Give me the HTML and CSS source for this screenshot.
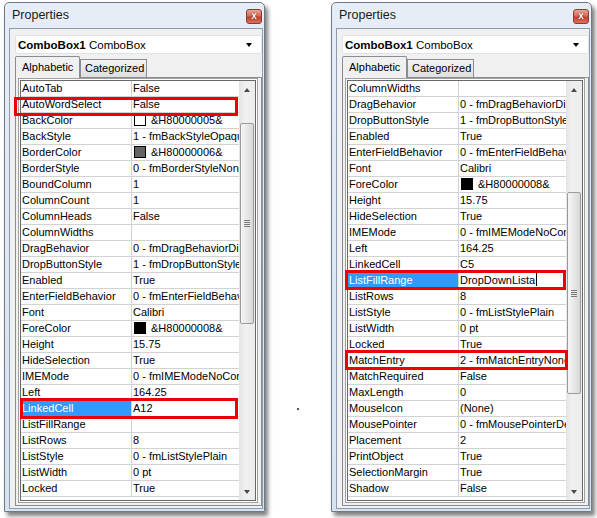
FILE: index.html
```html
<!DOCTYPE html>
<html>
<head>
<meta charset="utf-8">
<title>Properties</title>
<link rel="stylesheet" href="styles.css">
</head>
<body>
<div class="stage">
  <div class="win">
    <div class="titlebar"><span class="title">Properties</span><span class="close">x</span></div>
    <div class="framebody">
      <div class="content">
        <div class="combo"><span class="combo-text"><b>ComboBox1</b> ComboBox</span><span class="combo-arrow"></span></div>
        <div class="tabs"><div class="tab active">Alphabetic</div><div class="tab">Categorized</div></div>
        <div class="panel">
          <div class="grid">
            <div class="grid-inner">
              <div class="rows">
                <div class="row"><div class="name">AutoTab</div><div class="val">False</div></div>
                <div class="row"><div class="name">AutoWordSelect</div><div class="val">False</div></div>
                <div class="row"><div class="name">BackColor</div><div class="val"><span class="sw sw-white"></span>&amp;H80000005&amp;</div></div>
                <div class="row"><div class="name">BackStyle</div><div class="val">1 - fmBackStyleOpaque</div></div>
                <div class="row"><div class="name">BorderColor</div><div class="val"><span class="sw sw-gray"></span>&amp;H80000006&amp;</div></div>
                <div class="row"><div class="name">BorderStyle</div><div class="val">0 - fmBorderStyleNone</div></div>
                <div class="row"><div class="name">BoundColumn</div><div class="val">1</div></div>
                <div class="row"><div class="name">ColumnCount</div><div class="val">1</div></div>
                <div class="row"><div class="name">ColumnHeads</div><div class="val">False</div></div>
                <div class="row"><div class="name">ColumnWidths</div><div class="val"></div></div>
                <div class="row"><div class="name">DragBehavior</div><div class="val">0 - fmDragBehaviorDisabled</div></div>
                <div class="row"><div class="name">DropButtonStyle</div><div class="val">1 - fmDropButtonStyleArrow</div></div>
                <div class="row"><div class="name">Enabled</div><div class="val">True</div></div>
                <div class="row"><div class="name">EnterFieldBehavior</div><div class="val">0 - fmEnterFieldBehaviorSelectAll</div></div>
                <div class="row"><div class="name">Font</div><div class="val">Calibri</div></div>
                <div class="row"><div class="name">ForeColor</div><div class="val"><span class="sw sw-black"></span>&amp;H80000008&amp;</div></div>
                <div class="row"><div class="name">Height</div><div class="val">15.75</div></div>
                <div class="row"><div class="name">HideSelection</div><div class="val">True</div></div>
                <div class="row"><div class="name">IMEMode</div><div class="val">0 - fmIMEModeNoControl</div></div>
                <div class="row"><div class="name">Left</div><div class="val">164.25</div></div>
                <div class="row"><div class="name sel">LinkedCell</div><div class="val">A12</div></div>
                <div class="row"><div class="name">ListFillRange</div><div class="val"></div></div>
                <div class="row"><div class="name">ListRows</div><div class="val">8</div></div>
                <div class="row"><div class="name">ListStyle</div><div class="val">0 - fmListStylePlain</div></div>
                <div class="row"><div class="name">ListWidth</div><div class="val">0 pt</div></div>
                <div class="row"><div class="name">Locked</div><div class="val">True</div></div>
              </div>
              <div class="sb">
                <div class="sb-btn"><span class="arr-up"></span></div>
                <div class="thumb thumb-left"><span class="grip"></span></div>
                <div class="sb-fill"></div>
                <div class="sb-btn"><span class="arr-down"></span></div>
              </div>
            </div>
          </div>
        </div>
      </div>
    </div>
    <div class="hl hl-l1"></div>
    <div class="hl hl-l2"></div>
  </div>

  <div class="gap"><span class="dot"></span></div>

  <div class="win">
    <div class="titlebar"><span class="title">Properties</span><span class="close">x</span></div>
    <div class="framebody">
      <div class="content">
        <div class="combo"><span class="combo-text"><b>ComboBox1</b> ComboBox</span><span class="combo-arrow"></span></div>
        <div class="tabs"><div class="tab active">Alphabetic</div><div class="tab">Categorized</div></div>
        <div class="panel">
          <div class="grid">
            <div class="grid-inner">
              <div class="rows">
                <div class="row"><div class="name">ColumnWidths</div><div class="val"></div></div>
                <div class="row"><div class="name">DragBehavior</div><div class="val">0 - fmDragBehaviorDisabled</div></div>
                <div class="row"><div class="name">DropButtonStyle</div><div class="val">1 - fmDropButtonStyleArrow</div></div>
                <div class="row"><div class="name">Enabled</div><div class="val">True</div></div>
                <div class="row"><div class="name">EnterFieldBehavior</div><div class="val">0 - fmEnterFieldBehaviorSelectAll</div></div>
                <div class="row"><div class="name">Font</div><div class="val">Calibri</div></div>
                <div class="row"><div class="name">ForeColor</div><div class="val"><span class="sw sw-black"></span>&amp;H80000008&amp;</div></div>
                <div class="row"><div class="name">Height</div><div class="val">15.75</div></div>
                <div class="row"><div class="name">HideSelection</div><div class="val">True</div></div>
                <div class="row"><div class="name">IMEMode</div><div class="val">0 - fmIMEModeNoControl</div></div>
                <div class="row"><div class="name">Left</div><div class="val">164.25</div></div>
                <div class="row"><div class="name">LinkedCell</div><div class="val">C5</div></div>
                <div class="row"><div class="name sel">ListFillRange</div><div class="val">DropDownLista<span class="caret"></span></div></div>
                <div class="row"><div class="name">ListRows</div><div class="val">8</div></div>
                <div class="row"><div class="name">ListStyle</div><div class="val">0 - fmListStylePlain</div></div>
                <div class="row"><div class="name">ListWidth</div><div class="val">0 pt</div></div>
                <div class="row"><div class="name">Locked</div><div class="val">True</div></div>
                <div class="row"><div class="name">MatchEntry</div><div class="val">2 - fmMatchEntryNone</div></div>
                <div class="row"><div class="name">MatchRequired</div><div class="val">False</div></div>
                <div class="row"><div class="name">MaxLength</div><div class="val">0</div></div>
                <div class="row"><div class="name">MouseIcon</div><div class="val">(None)</div></div>
                <div class="row"><div class="name">MousePointer</div><div class="val">0 - fmMousePointerDefault</div></div>
                <div class="row"><div class="name">Placement</div><div class="val">2</div></div>
                <div class="row"><div class="name">PrintObject</div><div class="val">True</div></div>
                <div class="row"><div class="name">SelectionMargin</div><div class="val">True</div></div>
                <div class="row"><div class="name">Shadow</div><div class="val">False</div></div>
              </div>
              <div class="sb">
                <div class="sb-btn"><span class="arr-up"></span></div>
                <div class="thumb thumb-right"><span class="grip"></span></div>
                <div class="sb-fill"></div>
                <div class="sb-btn"><span class="arr-down"></span></div>
              </div>
            </div>
          </div>
        </div>
      </div>
    </div>
    <div class="hl hl-r1"></div>
    <div class="hl hl-r2"></div>
  </div>
</div>
</body>
</html>
```

FILE: styles.css
```css
html, body {
  margin: 0;
  padding: 0;
}
body {
  width: 597px;
  height: 518px;
  overflow: hidden;
  background: #ffffff;
  font-family: "Liberation Sans", Arial, sans-serif;
  color: #000;
}
.stage {
  display: flex;
  align-items: flex-start;
  padding: 2px 0 0 4px;
}
.win {
  position: relative;
  width: 261px;
  height: 510px;
  box-sizing: border-box;
  border: 1px solid #6e7a8a;
  border-radius: 5px 5px 0 0;
  background: linear-gradient(#e6edf6, #d7e3f0);
  box-shadow: 3px 4px 4px rgba(0, 0, 0, 0.5);
  display: flex;
  flex-direction: column;
  flex: none;
}
.titlebar {
  height: 25px;
  flex: none;
  display: flex;
  justify-content: space-between;
  align-items: flex-start;
  padding: 0 2px 0 7px;
}
.title {
  font-size: 12.5px;
  line-height: 25px;
  color: #1b1b1b;
}
.close {
  margin-top: 6px;
  width: 16px;
  height: 15px;
  box-sizing: border-box;
  border: 1px solid #8a3a2f;
  border-radius: 3px;
  background: linear-gradient(#eaa595, #d46b58 45%, #c0412d 55%, #d9725c);
  color: #fff;
  font-size: 10px;
  font-weight: bold;
  line-height: 12px;
  text-align: center;
  text-shadow: 0 0 1px #5a1c12, 0 0 1px #5a1c12;
}
.framebody {
  flex: 1;
  min-width: 0;
  min-height: 0;
  display: flex;
  padding: 0 1px 2px 4px;
}
.content {
  flex: 1;
  min-width: 0;
  display: flex;
  flex-direction: column;
  border: 1px solid #8d9bb0;
  background: #f0f0f0;
  padding: 6px 0 2px 5px;
}
.combo {
  height: 19px;
  box-sizing: border-box;
  flex: none;
  border: 1px solid #dfe3e9;
  border-radius: 2px;
  background: #fff;
  display: flex;
  align-items: center;
  justify-content: space-between;
  padding: 0 9px 0 2px;
  font-size: 11.5px;
}
.combo-text b {
  font-weight: bold;
}
.combo-arrow {
  width: 0;
  height: 0;
  border-left: 3.5px solid transparent;
  border-right: 3.5px solid transparent;
  border-top: 4px solid #000;
  margin-top: 1px;
}
.tabs {
  display: flex;
  align-items: flex-end;
  height: 21px;
  margin-top: 2px;
  flex: none;
  position: relative;
  z-index: 1;
}
.tab {
  height: 18px;
  box-sizing: border-box;
  border: 1px solid #898c95;
  border-bottom: none;
  background: linear-gradient(#f2f2f2, #e0e0e0);
  font-size: 11px;
  line-height: 17px;
  padding: 0 0 0 4px;
  width: 67px;
}
.tab.active {
  height: 22px;
  margin-bottom: -1px;
  width: 65px;
  background: #f0f0f0;
  line-height: 20px;
  padding-left: 6px;
  border-radius: 2px 2px 0 0;
}
.panel {
  flex: 1;
  min-width: 0;
  min-height: 0;
  display: flex;
  border: 1px solid #898c95;
  padding: 0 3px 2px 2px;
}
.grid {
  flex: 1;
  min-width: 0;
  display: flex;
  border: 1px solid #a0a0a0;
  padding: 1px;
  background: #fff;
}
.grid-inner {
  flex: 1;
  min-width: 0;
  display: flex;
  border: 1px solid #696969;
  background: #fff;
  overflow: hidden;
}
.rows {
  flex: 1;
  display: flex;
  flex-direction: column;
  min-width: 0;
  overflow: hidden;
}
.row {
  display: flex;
  height: 16px;
  flex: none;
  box-sizing: border-box;
  border-bottom: 1px solid #d2d2d2;
  font-size: 11px;
  line-height: 15px;
}
.name {
  width: 111px;
  flex: none;
  box-sizing: border-box;
  border-right: 1px solid #d2d2d2;
  padding-left: 1px;
  white-space: nowrap;
  overflow: hidden;
}
.name.sel {
  background: #3399ff;
  color: #fff;
}
.val {
  flex: 1;
  min-width: 0;
  padding-left: 1px;
  white-space: nowrap;
  overflow: hidden;
}
.sw {
  display: inline-block;
  vertical-align: -2px;
  width: 12px;
  height: 12px;
  box-sizing: border-box;
  border: 1px solid #000;
  margin: 0 5px 0 1px;
}
.sw-white { background: #fff; }
.sw-gray { background: #646464; }
.sw-black { background: #000; }
.caret {
  display: inline-block;
  vertical-align: -2px;
  width: 1px;
  height: 13px;
  background: #000;
  margin-left: 1px;
}
.sb {
  width: 16px;
  flex: none;
  display: flex;
  flex-direction: column;
  background: linear-gradient(to right, #e4e4e4, #f0f0f0 40%, #ececec);
}
.sb-btn {
  height: 17px;
  flex: none;
  display: flex;
  align-items: center;
  justify-content: center;
}
.arr-up {
  width: 0;
  height: 0;
  border-left: 3.5px solid transparent;
  border-right: 3.5px solid transparent;
  border-bottom: 4px solid #4a4a4a;
}
.arr-down {
  width: 0;
  height: 0;
  border-left: 3.5px solid transparent;
  border-right: 3.5px solid transparent;
  border-top: 4px solid #4a4a4a;
}
.thumb {
  flex: none;
  margin-left: 1px;
  margin-right: 1px;
  box-sizing: border-box;
  border: 1px solid #9b9b9b;
  border-radius: 2px;
  background: linear-gradient(to right, #f6f6f6, #e9e9e9 45%, #d8d8d8);
  display: flex;
  align-items: center;
  justify-content: center;
}
.thumb-left {
  margin-top: 25px;
  height: 201px;
}
.thumb-right {
  margin-top: 94px;
  height: 202px;
}
.grip {
  width: 6px;
  height: 7px;
  background: repeating-linear-gradient(#7a7a7a 0 1px, transparent 1px 2px);
}
.sb-fill {
  flex: 1;
}
.hl {
  position: absolute;
  box-sizing: border-box;
  border: 3px solid #ee0000;
  z-index: 5;
}
.hl-l1 { left: 9px; top: 94px; width: 224px; height: 19px; }
.hl-l2 { left: 15px; top: 395px; width: 218px; height: 21px; }
.hl-r1 { left: 13px; top: 267px; width: 221px; height: 20px; }
.hl-r2 { left: 13px; top: 347px; width: 223px; height: 20px; }
.gap {
  width: 66px;
  flex: none;
}
.dot {
  display: block;
  width: 2px;
  height: 2px;
  background: #555;
  margin: 406px 0 0 32px;
}
```
